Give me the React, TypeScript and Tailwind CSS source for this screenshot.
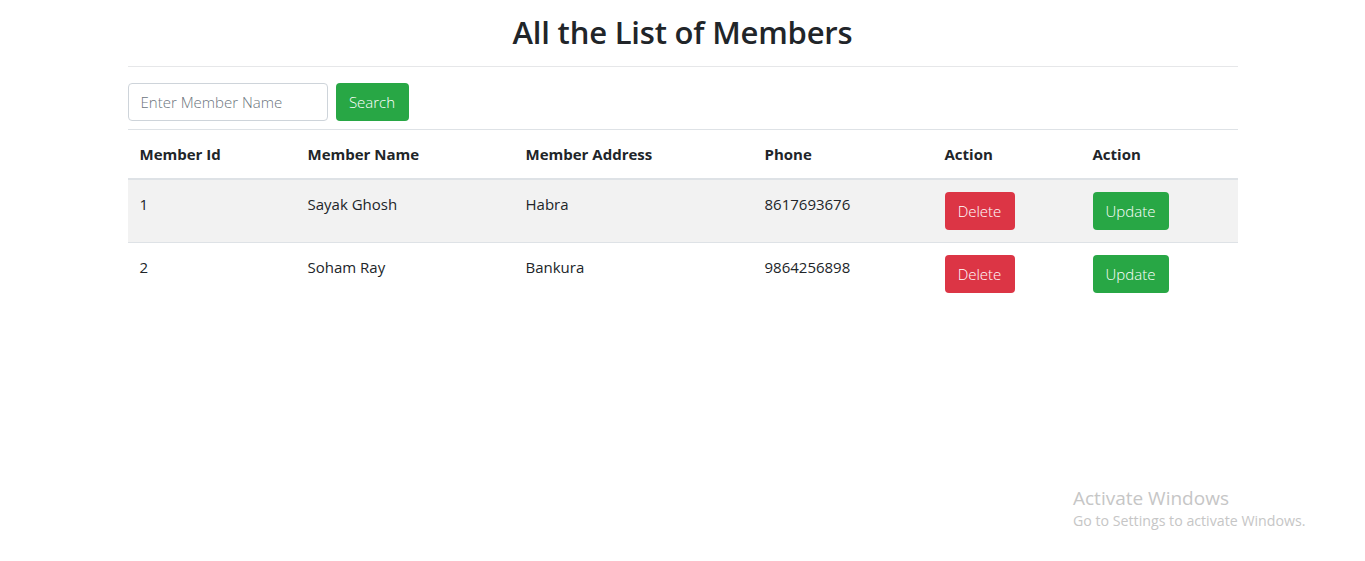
import React from 'react';

const members = [
  { id: 1, name: 'Sayak Ghosh', address: 'Habra', phone: '8617693676' },
  { id: 2, name: 'Soham Ray', address: 'Bankura', phone: '9864256898' },
];

const cols = ['w-[168px]', 'w-[218px]', 'w-[239px]', 'w-[180px]', 'w-[148px]', 'w-[157px]'];
const heads = ['Member Id', 'Member Name', 'Member Address', 'Phone', 'Action', 'Action'];

export default function App() {
  return (
    <div className="relative min-h-[561px] bg-white text-[#212529] font-['Open_Sans',sans-serif]">
      <div className="mx-auto w-[1110px]">
        {/* Title */}
        <h2 className="pt-[13px] text-center text-[31px] font-semibold leading-[38px] tracking-[-0.2px]">
          All the List of Members
        </h2>
        <hr className="mt-[15px] border-0 border-t border-[#e6e7e9]" />

        {/* Search */}
        <div className="mt-[16px] flex gap-2">
          <input
            placeholder="Enter Member Name"
            className="h-[38px] w-[200px] rounded border border-[#ced4da] px-3 text-[15px] font-light text-[#495057] placeholder:text-[#6c757d] outline-none"
          />
          <button className="h-[38px] w-[73px] rounded bg-[#28a745] text-[15px] font-light text-white">
            Search
          </button>
        </div>

        {/* Table */}
        <table className="mt-[8px] w-full border-collapse text-[15px]">
          <thead>
            <tr className="border-t border-[#dee2e6]">
              {heads.map((h, i) => (
                <th
                  key={i}
                  className={`${cols[i]} border-b-2 border-[#dee2e6] px-3 pt-[12px] pb-[12px] text-left font-bold leading-6`}
                >
                  {h}
                </th>
              ))}
            </tr>
          </thead>
          <tbody>
            {members.map((m, idx) => (
              <tr key={m.id} className={`border-t border-[#dee2e6] ${idx % 2 === 0 ? 'bg-[#f2f2f2]' : ''}`}>
                <td className="px-3 py-3 align-top leading-6">{m.id}</td>
                <td className="px-3 py-3 align-top leading-6">{m.name}</td>
                <td className="px-3 py-3 align-top leading-6">{m.address}</td>
                <td className="px-3 py-3 align-top leading-6">{m.phone}</td>
                <td className="px-3 py-3 align-top">
                  <button className="h-[38px] w-[70px] rounded bg-[#dc3545] text-[15px] font-light text-white">
                    Delete
                  </button>
                </td>
                <td className="px-3 py-3 align-top">
                  <button className="h-[38px] w-[76px] rounded bg-[#28a745] text-[15px] font-light text-white">
                    Update
                  </button>
                </td>
              </tr>
            ))}
          </tbody>
        </table>
      </div>

      {/* Windows watermark */}
      <div className="absolute left-[1073px] top-[487px] text-[#c6c6c6] leading-tight">
        <div className="text-[19px]">Activate Windows</div>
        <div className="mt-[1px] text-[14.2px]">Go to Settings to activate Windows.</div>
      </div>
    </div>
  );
}
